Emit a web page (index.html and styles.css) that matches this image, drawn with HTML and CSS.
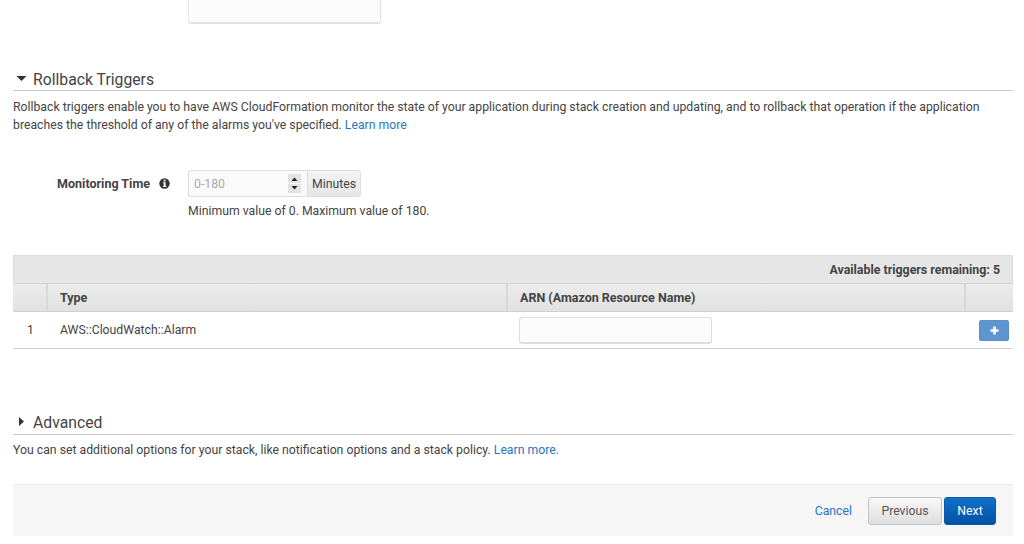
FILE: index.html
```html
<!DOCTYPE html>
<html lang="en">
<head>
<meta charset="utf-8">
<title>Rollback Triggers</title>
<link rel="stylesheet" href="styles.css">
</head>
<body>
<div class="page">
  <div class="stub-row"><div class="stub-input"></div></div>

  <section class="rollback">
    <h2 class="sec-head">
      <svg class="caret" width="11" height="11" viewBox="0 0 11 11"><path d="M0.5 3h10L5.5 8z" fill="#333"/></svg>
      <span>Rollback Triggers</span>
    </h2>
    <p class="desc">Rollback triggers enable you to have AWS CloudFormation monitor the state of your application during stack creation and updating, and to rollback that operation if the application breaches the threshold of any of the alarms you've specified. <a href="#">Learn more</a></p>

    <div class="form-row">
      <div class="form-label">
        <span>Monitoring Time</span>
        <svg class="info" width="11" height="11" viewBox="0 0 11 11"><circle cx="5.5" cy="5.5" r="5.2" fill="#333"/><rect x="4.6" y="1.7" width="2" height="1.7" fill="#fff"/><path d="M3.9 4.3h2.7v3.6h.8v1H3.9v-1h.8V5.3h-.8z" fill="#fff"/></svg>
      </div>
      <div class="form-field">
        <div class="input-group">
          <div class="num-input">
            <span class="placeholder">0-180</span>
            <span class="spinner">
              <svg width="13" height="19" viewBox="0 0 13 19"><rect width="13" height="19" fill="#e4e4e4"/><rect y="9" width="13" height="1" fill="#fafafa"/><path d="M3.5 7L6.500 3.500 9.500 7z" fill="#222"/><path d="M3.500 12h6L6.500 15.500z" fill="#222"/></svg>
            </span>
          </div>
          <div class="addon">Minutes</div>
        </div>
        <p class="hint">Minimum value of 0. Maximum value of 180.</p>
      </div>
    </div>

    <div class="table">
      <div class="tbl-top">Available triggers remaining: 5</div>
      <div class="tbl-grid tbl-head">
        <div class="cell"></div>
        <div class="cell">Type</div>
        <div class="cell">ARN (Amazon Resource Name)</div>
        <div class="cell"></div>
      </div>
      <div class="tbl-grid tbl-row">
        <div class="cell idx">1</div>
        <div class="cell">AWS::CloudWatch::Alarm</div>
        <div class="cell"><div class="arn-input"></div></div>
        <div class="cell add-cell">
          <button class="add-btn" type="button"><svg width="9" height="9" viewBox="0 0 9 9"><path d="M3.200 .5h2.600v2.700h2.700v2.600H5.800v2.700H3.200V5.800H.5V3.200h2.700z" fill="#fff"/></svg></button>
        </div>
      </div>
    </div>
  </section>

  <section class="advanced">
    <h2 class="sec-head">
      <svg class="caret" width="11" height="11" viewBox="0 0 11 11"><path d="M3 1v9l5-4.500z" fill="#333"/></svg>
      <span>Advanced</span>
    </h2>
    <p class="desc">You can set additional options for your stack, like notification options and a stack policy. <a href="#">Learn more.</a></p>
  </section>

  <footer class="actions">
    <a class="cancel" href="#">Cancel</a>
    <button class="btn btn-prev" type="button">Previous</button>
    <button class="btn btn-next" type="button">Next</button>
  </footer>
</div>
</body>
</html>
```

FILE: styles.css
```css
* { box-sizing: border-box; }
html, body { margin: 0; padding: 0; background: #fff; }
body {
  font-family: Roboto, "Liberation Sans", sans-serif;
  font-size: 12.25px;
  color: #444;
  height: 544px;
  overflow: hidden;
}
a { color: #2a74c4; text-decoration: none; }
.page { width: 1000px; margin-left: 13px; }

.stub-row { height: 24px; padding-left: 175px; }
.stub-input {
  width: 193px; height: 24px;
  background: #fcfcfc;
  border: 1px solid #e2e2e2;
  border-top: 0;
  border-bottom: 2px solid #e2e2e2;
  border-radius: 0 0 3px 3px;
}

.rollback { padding-top: 45px; }
.sec-head {
  display: flex; align-items: center; gap: 6px;
  margin: 0; height: 22px; padding-left: 3px;
  font-size: 15.75px; font-weight: 400; color: #444;
  border-bottom: 1px solid #ccc;
  line-height: 20px;
}
.caret { flex: none; position: relative; top: -1px; }
.desc { margin: 7px 0 0; line-height: 18px; color: #444; }

.form-row { display: flex; margin-top: 36px; }
.form-label {
  width: 157px; height: 26px;
  display: flex; align-items: center; justify-content: flex-end; gap: 9px;
  font-weight: 700; font-size: 12.5px; color: #444;
}
.form-field { margin-left: 18px; }
.input-group { display: flex; height: 27px; width: 173px; }
.num-input {
  flex: 1; display: flex; align-items: center; justify-content: space-between;
  padding: 0 6px 0 5px;
  background: #fafafa;
  border: 1px solid #ddd; border-right: 0;
  border-radius: 3px 0 0 3px;
}
.placeholder { color: #aaa; }
.spinner { display: flex; }
.addon {
  width: 54px; display: flex; align-items: center; justify-content: center;
  background: linear-gradient(#f3f3f3, #e6e6e6);
  border: 1px solid #ddd;
  border-radius: 0 3px 3px 0;
  color: #444;
}
.hint { margin: 7px 0 0; line-height: 15px; color: #444; }

.table { margin-top: 36px; }
.tbl-top {
  height: 29px; padding: 0 12px 0 0;
  display: flex; align-items: center; justify-content: flex-end;
  background: #e6e6e6;
  border: 1px solid #ddd; border-bottom: 1px solid #d2d2d2;
  font-weight: 700; font-size: 12.4px; color: #444;
}
.tbl-grid { display: grid; grid-template-columns: 33px 460px 458px 49px; }
.tbl-head {
  height: 28px;
  background: linear-gradient(#ececec, #e1e1e1);
  border-bottom: 1px solid #d0d0d0;
  font-weight: 700; font-size: 12.5px;
}
.tbl-head .cell { display: flex; align-items: center; padding-left: 12px; border-left: 2px solid #d9d9d9; }
.tbl-head .cell:first-child { border-left: 0; }
.tbl-row { height: 37px; border-bottom: 1px solid #d0d0d0; }
.tbl-row .cell { display: flex; align-items: center; padding-left: 14px; }
.tbl-row .cell:nth-child(3) { padding-left: 13px; }
.arn-input {
  width: 193px; height: 27px;
  background: #fcfcfc;
  border: 1px solid #ddd; border-bottom-width: 2px;
  border-radius: 3px;
}
.tbl-row .add-cell { padding-left: 15px; }
.add-btn {
  width: 30px; height: 21px; padding: 0;
  display: flex; align-items: center; justify-content: center;
  background: #5f95cf; border: 1px solid #5a90ca; border-radius: 2px;
}

.advanced { padding-top: 62px; }
.advanced .sec-head { height: 24px; }
.advanced .desc { margin-top: 6px; }

.actions {
  margin-top: 25px; height: 52px;
  display: flex; align-items: center; justify-content: flex-end;
  background: #f6f6f6;
  border-top: 1px solid #ebebeb;
  padding-right: 17px;
}
.cancel { margin-right: 16px; }
.btn {
  height: 28px; font: inherit; border-radius: 3px; cursor: pointer; padding: 0;
}
.btn-prev {
  width: 74px;
  background: linear-gradient(#f8f8f8, #dedede);
  border: 1px solid #c2c2c2; color: #555;
}
.btn-next {
  width: 52px; margin-left: 2px;
  background: linear-gradient(#1170c9, #0052a6);
  border: 1px solid #0b5aa8; color: #fff;
}
```
